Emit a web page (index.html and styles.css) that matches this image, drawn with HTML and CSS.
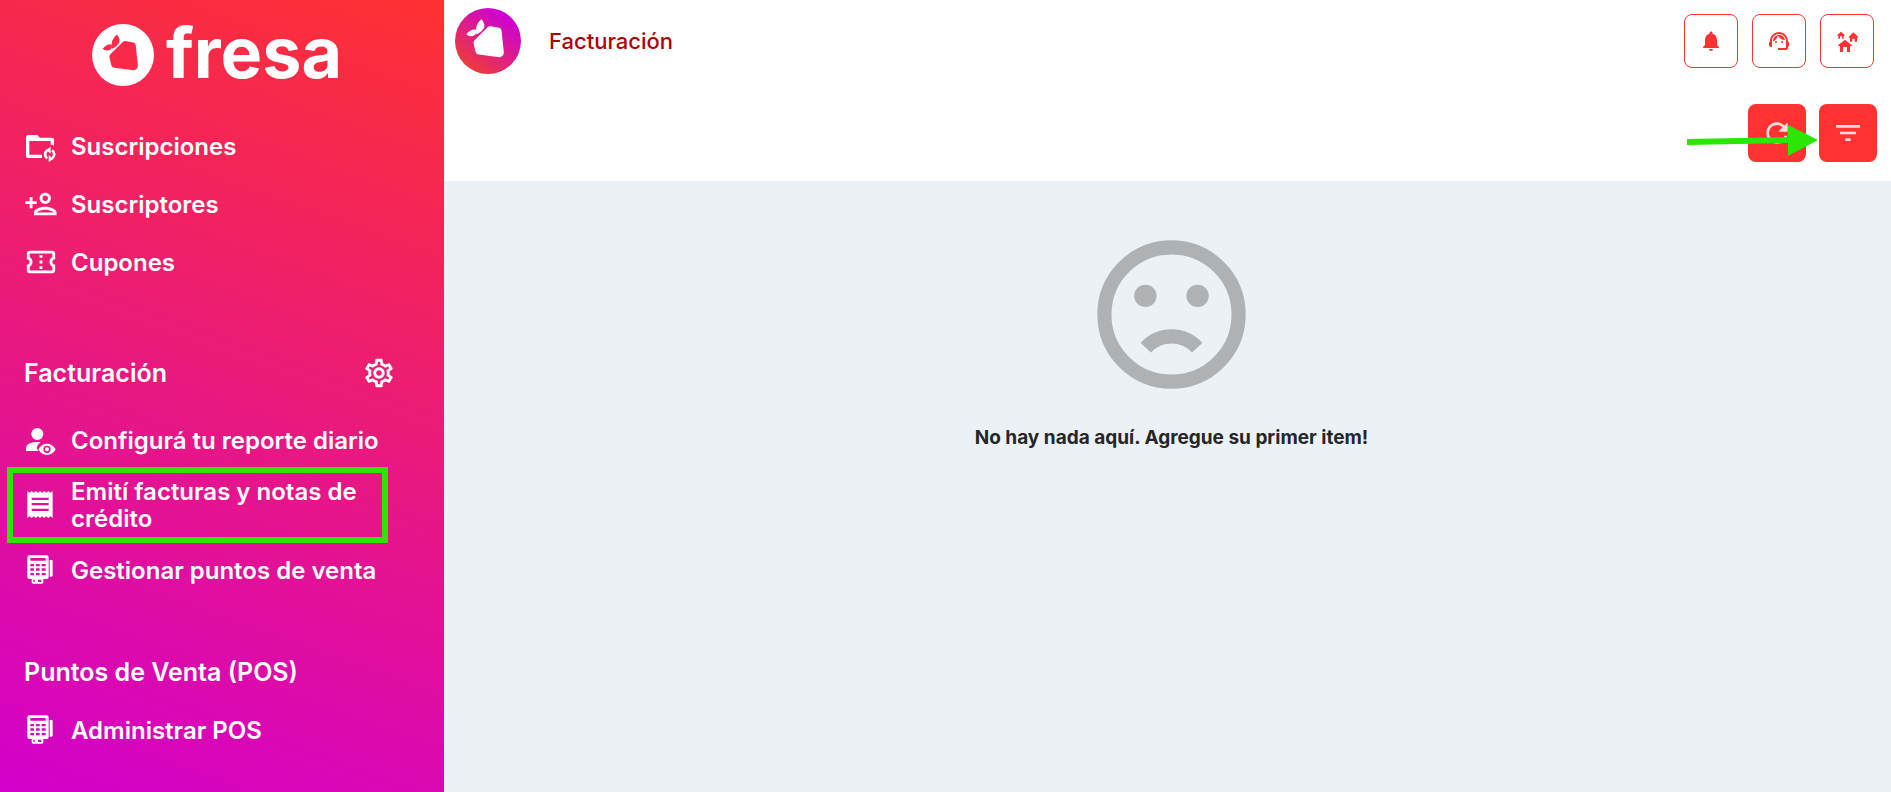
FILE: index.html
```html
<!DOCTYPE html>
<html lang="es">
<head>
  <meta charset="UTF-8" />
  <meta name="viewport" content="width=device-width, initial-scale=1.0"/>
  <title>Fresa - Facturación</title>
  <link rel="stylesheet" href="styles.css">
</head>
<body>
  <!-- Íconos compartidos -->
  <svg class="sprite" aria-hidden="true">
    <symbol id="berry" viewBox="0 0 200 200">
      <path d="M100 57Q106 54 112 56L134 60Q140 61 141 68L148 135Q147 148 134 149L72 141Q64 140 62 132L56 106Q56 101 60 97Z"/>
      <path d="M80 34Q92 46 88 60Q82 72 65 80Q58 52 80 34Z"/>
      <path d="M34 80Q46 64 62 65Q68 74 60 82Q46 90 34 80Z"/>
    </symbol>
    <symbol id="pos" viewBox="0 0 102 102">
      <path fill-rule="evenodd" d="M16 7H68Q74 7 74 13V72Q74 78 68 78H58V88Q58 92 54 92H27Q23 92 23 88V78H16Q10 78 10 72V13Q10 7 16 7ZM19 15V23H65V15ZM19 33V40H30V33ZM36 33V40H47V33ZM53 33V40H65V33ZM19 46V53H30V46ZM36 46V53H47V46ZM53 46V53H65V46ZM19 60V67H30V60ZM36 60V67H47V60ZM53 60V67H65V60ZM28 80V87H32V80ZM42 80V87H52V80Z"/>
      <path d="M77 21H82Q86 21 86 25V67Q86 71 82 71H77Z"/>
    </symbol>
  </svg>

  <div class="layout">
    <aside class="sidebar">
      <a class="brand" href="#">
        <svg class="brand-icon" viewBox="0 0 200 200" aria-hidden="true">
          <circle cx="100" cy="100" r="100" fill="#fff"/>
          <use href="#berry" fill="#f92a4a"/>
        </svg>
        <span class="brand-name">fresa</span>
      </a>

      <nav class="menu">
        <section class="menu-group">
          <a class="menu-item" href="#">
            <svg class="menu-icon" viewBox="0 0 102 102" aria-hidden="true">
              <path fill-rule="evenodd" d="M13 18H37Q41 18 43 21L47 26H83Q90 26 90 33V50Q85 46 80 48V36H16V77H54V87H13Q6 87 6 80V25Q6 18 13 18Z"/>
              <path d="M70 88A14 14 0 0 1 70 64M84 64A14 14 0 0 1 84 88" fill="none" stroke="#fff" stroke-width="8"/>
              <path d="M66 63L80 53V74ZM88 90L74 78V99Z"/>
            </svg>
            <span>Suscripciones</span>
          </a>
          <a class="menu-item" href="#">
            <svg class="menu-icon" viewBox="0 0 24 24" aria-hidden="true">
              <path d="M15 12c2.21 0 4-1.79 4-4s-1.79-4-4-4-4 1.79-4 4 1.79 4 4 4zm0-6c1.1 0 2 .9 2 2s-.9 2-2 2-2-.9-2-2 .9-2 2-2zm0 8c-2.67 0-8 1.34-8 4v2h16v-2c0-2.66-5.33-4-8-4zm-6 4c.22-.72 3.31-2 6-2 2.7 0 5.8 1.29 6 2H9zm-3-3v-3h3v-2H6V7H4v3H1v2h3v3z"/>
            </svg>
            <span>Suscriptores</span>
          </a>
          <a class="menu-item" href="#">
            <svg class="menu-icon" viewBox="0 0 24 24" aria-hidden="true">
              <path d="M22 10V6c0-1.11-.9-2-2-2H4c-1.1 0-1.99.89-1.99 2v4c1.1 0 1.99.9 1.99 2s-.89 2-2 2v4c0 1.1.9 2 2 2h16c1.1 0 2-.9 2-2v-4c-1.1 0-2-.9-2-2s.9-2 2-2zm-2-1.46c-1.19.69-2 1.99-2 3.46s.81 2.77 2 3.46V18H4v-2.54c1.19-.69 2-1.99 2-3.46 0-1.48-.8-2.77-1.99-3.46L4 6h16v2.54zM11 15h2v2h-2zm0-4h2v2h-2zm0-4h2v2h-2z"/>
            </svg>
            <span>Cupones</span>
          </a>
        </section>

        <section class="menu-group">
          <div class="menu-head with-action">
            <h2>Facturación</h2>
            <button class="gear" type="button" aria-label="Configuración">
              <svg class="menu-icon" viewBox="0 0 24 24" aria-hidden="true">
                <path d="M19.43 12.98c.04-.32.07-.64.07-.98 0-.34-.03-.66-.07-.98l2.11-1.65c.19-.15.24-.42.12-.64l-2-3.46c-.09-.16-.26-.25-.44-.25-.06 0-.12.01-.17.03l-2.49 1c-.52-.4-1.08-.73-1.69-.98l-.38-2.65C14.46 2.18 14.25 2 14 2h-4c-.25 0-.46.18-.49.42l-.38 2.65c-.61.25-1.17.59-1.69.98l-2.49-1c-.06-.02-.12-.03-.18-.03-.17 0-.34.09-.43.25l-2 3.46c-.13.22-.07.49.12.64l2.11 1.65c-.04.32-.07.65-.07.98 0 .33.03.66.07.98l-2.11 1.65c-.19.15-.24.42-.12.64l2 3.46c.09.16.26.25.44.25.06 0 .12-.01.17-.03l2.49-1c.52.4 1.08.73 1.69.98l.38 2.65c.03.24.24.42.49.42h4c.25 0 .46-.18.49-.42l.38-2.65c.61-.25 1.17-.59 1.69-.98l2.49 1c.06.02.12.03.18.03.17 0 .34-.09.43-.25l2-3.46c.12-.22.07-.49-.12-.64l-2.11-1.65zm-1.98-1.71c.04.31.05.52.05.73 0 .21-.02.43-.05.73l-.14 1.13.89.7 1.08.84-.7 1.21-1.27-.51-1.04-.42-.9.68c-.43.32-.84.56-1.25.73l-1.06.43-.16 1.13-.2 1.35h-1.4l-.19-1.35-.16-1.13-1.06-.43c-.43-.18-.83-.41-1.23-.71l-.91-.7-1.06.43-1.27.51-.7-1.21 1.08-.84.89-.7-.14-1.13c-.03-.31-.05-.54-.05-.74s.02-.43.05-.73l.14-1.13-.89-.7-1.08-.84.7-1.21 1.27.51 1.04.42.9-.68c.43-.32.84-.56 1.25-.73l1.06-.43.16-1.13.2-1.35h1.39l.19 1.35.16 1.13 1.06.43c.43.18.83.41 1.23.71l.91.7 1.06-.43 1.27-.51.7 1.21-1.07.85-.89.7.14 1.13zM12 8c-2.21 0-4 1.79-4 4s1.79 4 4 4 4-1.79 4-4-1.79-4-4-4zm0 6c-1.1 0-2-.9-2-2s.9-2 2-2 2 .9 2 2-.9 2-2 2z"/>
              </svg>
            </button>
          </div>
          <a class="menu-item" href="#">
            <svg class="menu-icon" viewBox="0 0 102 102" aria-hidden="true">
              <circle cx="40" cy="33" r="18"/>
              <path d="M6 84V74Q8 58 40 57H50Q40 64 38 76L43 84Z"/>
              <path fill-rule="evenodd" d="M43 79Q52 62 69 62Q86 62 95 79Q86 96 69 96Q52 96 43 79ZM69 68A11 11 0 1 0 69 90A11 11 0 1 0 69 68Z"/>
              <circle cx="69" cy="79" r="6"/>
            </svg>
            <span>Configurá tu reporte diario</span>
          </a>
          <a class="menu-item highlighted" href="#">
            <svg class="menu-icon" viewBox="0 0 102 102" aria-hidden="true">
              <path fill-rule="evenodd" d="M10 9L16 14L23 9L29 14L35 9L42 14L48 9L54 14L61 9L67 14L73 9L80 14L86 9V90L80 85L73 90L67 85L61 90L54 85L48 90L42 85L35 90L29 85L23 90L16 85L10 90ZM23 29V36H74V29ZM23 45V52H74V45ZM23 62V69H74V62Z"/>
            </svg>
            <span>Emití facturas y notas de crédito</span>
          </a>
          <a class="menu-item" href="#">
            <svg class="menu-icon" aria-hidden="true"><use href="#pos"/></svg>
            <span>Gestionar puntos de venta</span>
          </a>
        </section>

        <section class="menu-group">
          <div class="menu-head">
            <h2>Puntos de Venta (POS)</h2>
          </div>
          <a class="menu-item" href="#">
            <svg class="menu-icon" aria-hidden="true"><use href="#pos"/></svg>
            <span>Administrar POS</span>
          </a>
        </section>
      </nav>
    </aside>

    <div class="page">
      <header class="topbar">
        <svg class="avatar" viewBox="0 0 200 200" aria-hidden="true">
          <defs>
            <linearGradient id="avatarFill" x1="0.2" y1="0.9" x2="0.8" y2="0.1">
              <stop offset="0" stop-color="#ee3a3a"/>
              <stop offset="1" stop-color="#cc00d8"/>
            </linearGradient>
          </defs>
          <circle cx="100" cy="100" r="100" fill="url(#avatarFill)"/>
          <use href="#berry" fill="#fff"/>
        </svg>
        <h1>Facturación</h1>
        <div class="quick-actions">
          <button class="outline-btn" type="button" aria-label="Notificaciones">
            <svg viewBox="0 0 24 24" aria-hidden="true">
              <path d="M12 22c1.1 0 2-.9 2-2h-4c0 1.1.89 2 2 2zm6-6v-5c0-3.07-1.64-5.64-4.5-6.32V4c0-.83-.67-1.5-1.5-1.5s-1.5.67-1.5 1.5v.68C7.63 5.36 6 7.92 6 11v5l-2 2v1h16v-1l-2-2z"/>
            </svg>
          </button>
          <button class="outline-btn" type="button" aria-label="Soporte">
            <svg viewBox="0 0 24 24" aria-hidden="true">
              <path d="M21 12.22C21 6.73 16.74 3 12 3c-4.69 0-9 3.65-9 9.28-.6.34-1 .98-1 1.72v2c0 1.1.9 2 2 2h1v-6.1c0-3.87 3.13-7 7-7s7 3.13 7 7V19h-8v2h8c1.1 0 2-.9 2-2v-1.22c.59-.31 1-.92 1-1.64v-2.3c0-.7-.41-1.31-1-1.62z"/>
              <circle cx="9" cy="13" r="1"/>
              <circle cx="15" cy="13" r="1"/>
              <path d="M18 11.03C17.52 8.18 15.04 6 12.05 6c-3.03 0-6.29 2.51-6.03 6.45 2.47-1.01 4.33-3.21 4.86-5.89 1.31 2.63 4 4.44 7.12 4.47z"/>
            </svg>
          </button>
          <button class="outline-btn" type="button" aria-label="Sucursales">
            <svg viewBox="0 0 72 72" aria-hidden="true">
              <path d="M18 8L29 18V20H26V29H21V22H15V29H10V20H7V18Z"/>
              <path d="M55 10L70 24V26H66V38H59V29H52V38H45V26H41V24Z"/>
              <path d="M30 32L51 49V51H45V69H36V54H24V69H15V51H9V49Z"/>
            </svg>
          </button>
        </div>
      </header>

      <div class="toolbar">
        <button class="solid-btn" type="button" aria-label="Actualizar">
          <svg viewBox="0 0 24 24" aria-hidden="true">
            <path d="M17.65 6.35C16.2 4.9 14.21 4 12 4c-4.42 0-7.99 3.58-7.99 8s3.57 8 7.99 8c3.73 0 6.84-2.55 7.73-6h-2.08c-.82 2.33-3.04 4-5.65 4-3.31 0-6-2.69-6-6s2.69-6 6-6c1.66 0 3.14.69 4.22 1.78L13 11h7V4l-2.35 2.35z"/>
          </svg>
        </button>
        <button class="solid-btn" type="button" aria-label="Filtrar">
          <svg viewBox="0 0 24 24" aria-hidden="true">
            <path d="M10 18h4v-2h-4v2zM3 6v2h18V6H3zm3 7h12v-2H6v2z"/>
          </svg>
        </button>
        <!-- flecha que señala el filtro -->
        <svg class="pointer-arrow" viewBox="0 0 131 32" aria-hidden="true">
          <path d="M0 14L101 12V0L131 15L101 31V18L0 20Z"/>
        </svg>
      </div>

      <main class="empty">
        <svg class="empty-icon" viewBox="0 0 24 24" aria-hidden="true">
          <circle cx="12" cy="12" r="9" class="face-line"/>
          <path d="M8.56 16.46A4.65 4.65 0 0 1 15.44 16.46" class="face-line"/>
          <circle cx="8.5" cy="9.5" r="1.5"/>
          <circle cx="15.5" cy="9.5" r="1.5"/>
        </svg>
        <p>No hay nada aquí. Agregue su primer item!</p>
      </main>
    </div>
  </div>
</body>
</html>
```

FILE: styles.css
```css
* {
  box-sizing: border-box;
}
body {
  margin: 0;
  font-family: Inter, "Liberation Sans", sans-serif;
  background: #fff;
}
h1, h2, p {
  margin: 0;
}
a {
  color: inherit;
  text-decoration: none;
}
button {
  padding: 0;
  cursor: pointer;
}
.sprite {
  display: none;
}
.layout {
  display: flex;
  min-height: 100vh;
}

/* Barra lateral */
.sidebar {
  flex: 0 0 444px;
  color: #fff;
  background: linear-gradient(20deg, #d300cc, #ff3131);
}
.brand {
  display: flex;
  align-items: center;
  justify-content: center;
  gap: 12px;
  height: 117px;
  padding: 0 10px 7px 0;
}
.brand-icon {
  width: 62px;
  height: 62px;
}
.brand-name {
  padding-bottom: 4px;
  font-size: 70px;
  font-weight: 700;
  line-height: 70px;
}
.menu {
  display: flex;
  flex-direction: column;
  gap: 44px;
  padding: 0 48px 32px 24px;
}
.menu-item {
  display: flex;
  align-items: center;
  gap: 13px;
  min-height: 58px;
  padding: 9px 0;
  font-size: 24px;
  font-weight: 600;
  line-height: 27px;
}
.menu-icon {
  flex: none;
  width: 34px;
  height: 34px;
  fill: #fff;
}
.menu-head {
  display: flex;
  align-items: center;
  justify-content: space-between;
  min-height: 58px;
}
.menu-head.with-action {
  min-height: 76px;
}
.menu-head h2 {
  font-size: 25px;
  font-weight: 600;
}
.gear {
  display: flex;
  border: none;
  background: none;
}
.highlighted {
  position: relative;
}
.highlighted::before {
  content: "";
  position: absolute;
  inset: -2px 8px -2px -17px;
  border: 6px solid #2ae600;
}

/* Contenido */
.page {
  flex: 1;
  display: flex;
  flex-direction: column;
}
.topbar {
  display: flex;
  align-items: center;
  gap: 28px;
  height: 82px;
  padding: 0 17px 0 11px;
}
.avatar {
  width: 66px;
  height: 66px;
}
.topbar h1 {
  font-size: 22px;
  font-weight: 500;
  color: #b00000;
}
.quick-actions {
  display: flex;
  gap: 14px;
  margin-left: auto;
}
.outline-btn {
  display: flex;
  align-items: center;
  justify-content: center;
  width: 54px;
  height: 54px;
  background: #fff;
  border: 1px solid #ff3131;
  border-radius: 8px;
}
.outline-btn svg {
  width: 24px;
  height: 24px;
  fill: #ff3131;
}
.toolbar {
  position: relative;
  display: flex;
  justify-content: flex-end;
  gap: 13px;
  padding: 22px 14px 19px;
}
.solid-btn {
  display: flex;
  align-items: center;
  justify-content: center;
  width: 58px;
  height: 58px;
  background: #ff3131;
  border: none;
  border-radius: 8px;
}
.solid-btn svg {
  width: 32px;
  height: 32px;
  fill: #ffdcdc;
}
.pointer-arrow {
  position: absolute;
  top: 43px;
  right: 73px;
  width: 131px;
  height: 32px;
  fill: #2ae600;
}
.empty {
  flex: 1;
  display: flex;
  flex-direction: column;
  align-items: center;
  gap: 22px;
  padding: 44px 0 32px 8px;
  background: #ecf1f6;
}
.empty-icon {
  width: 179px;
  height: 179px;
  fill: #aeb2b5;
}
.face-line {
  fill: none;
  stroke: #aeb2b5;
  stroke-width: 1.9;
}
.empty p {
  font-size: 19px;
  font-weight: 700;
  line-height: 24px;
  color: #262626;
}
```
